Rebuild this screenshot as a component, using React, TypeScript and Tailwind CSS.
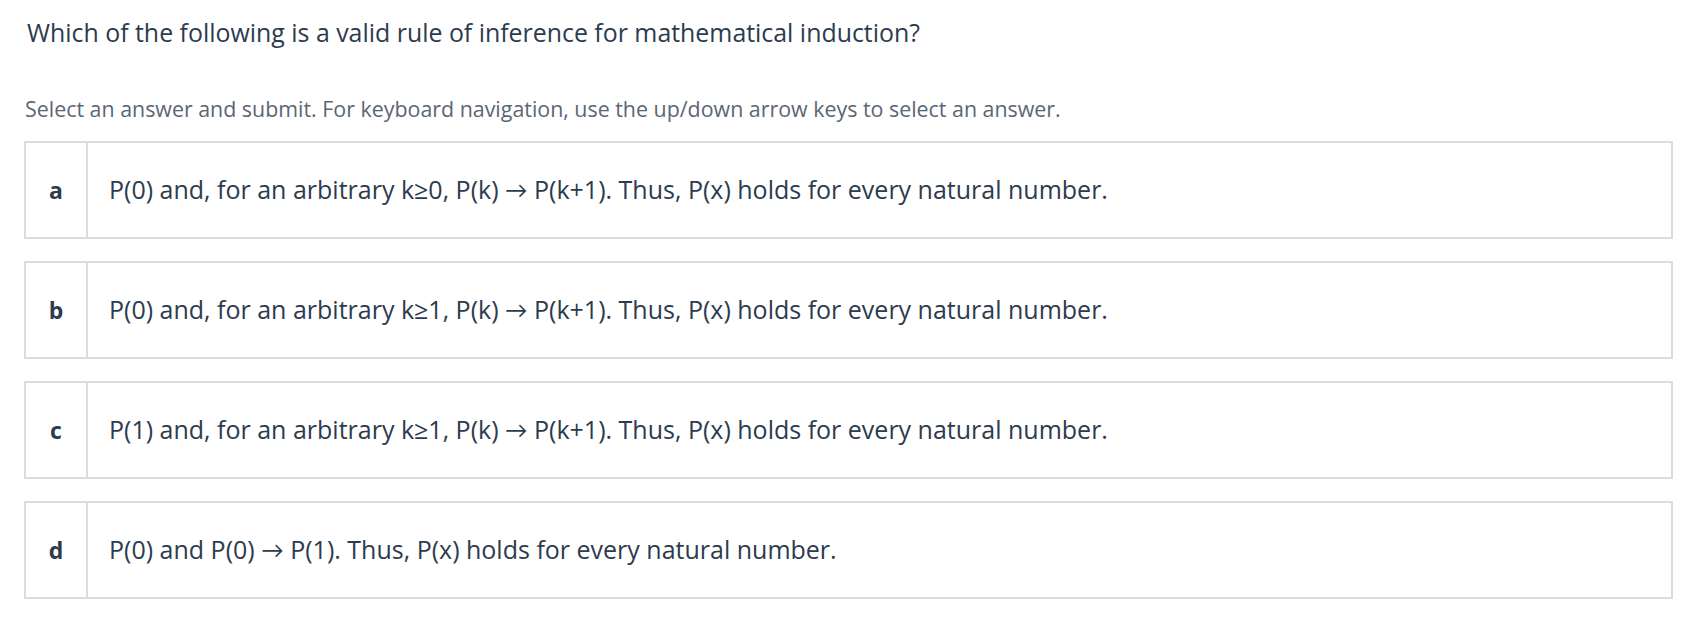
import React from 'react';

const Arrow = () => (
  <span className="text-[0.9em]" style={{ fontFamily: 'Lato, sans-serif' }}>→</span>
);

const options = [
  { key: 'a', pre: 'P(0) and, for an arbitrary k≥0, P(k) ', post: ' P(k+1). Thus, P(x) holds for every natural number.' },
  { key: 'b', pre: 'P(0) and, for an arbitrary k≥1, P(k) ', post: ' P(k+1). Thus, P(x) holds for every natural number.' },
  { key: 'c', pre: 'P(1) and, for an arbitrary k≥1, P(k) ', post: ' P(k+1). Thus, P(x) holds for every natural number.' },
  { key: 'd', pre: 'P(0) and P(0) ', post: ' P(1). Thus, P(x) holds for every natural number.' },
];

const App: React.FC = () => {
  return (
    <div
      className="w-[1689px] h-[637px] bg-white pl-[24px] pr-[16px] pt-[16px] text-[#2d3b4e]"
      style={{ fontFamily: '"Open Sans", "Noto Sans", sans-serif' }}
    >
      <h1 className="text-[24.9px] leading-[32px] pl-[3px]">
        Which of the following is a valid rule of inference for mathematical induction?
      </h1>

      <p className="mt-[48px] text-[21.4px] leading-[26px] pl-[1px] text-[#5b6674]">
        Select an answer and submit. For keyboard navigation, use the up/down arrow keys to select an answer.
      </p>

      <div className="mt-[19px] flex flex-col gap-[22px]">
        {options.map(o => (
          <div key={o.key} className="h-[98px] border-2 border-[#d9dde1] flex">
            <div className="w-[62px] shrink-0 border-r-2 border-[#d9dde1] flex items-center justify-center text-[23px] font-bold">
              {o.key}
            </div>
            <div className="flex items-center pl-[21px] text-[25px] whitespace-pre">
              {o.pre}<Arrow />{o.post}
            </div>
          </div>
        ))}
      </div>
    </div>
  );
};

export default App;
